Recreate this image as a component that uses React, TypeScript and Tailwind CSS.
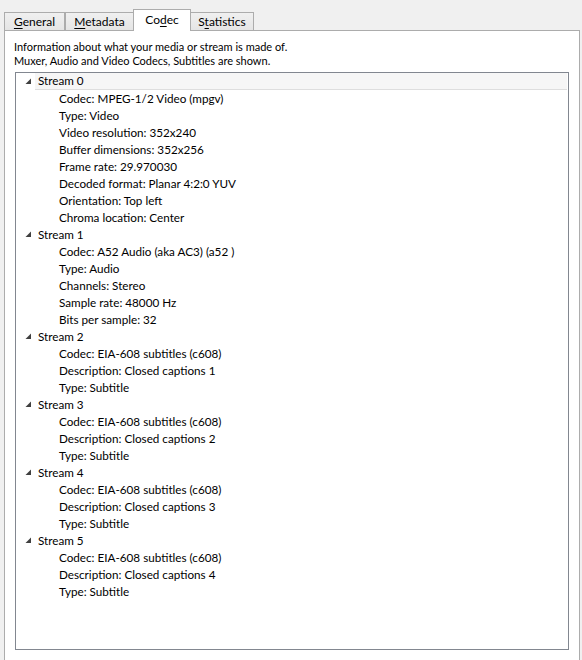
import React from "react";

interface Stream {
  name: string;
  props: string[];
}

const streams: Stream[] = [
  {
    name: "Stream 0",
    props: [
      "Codec: MPEG-1/2 Video (mpgv)",
      "Type: Video",
      "Video resolution: 352x240",
      "Buffer dimensions: 352x256",
      "Frame rate: 29.970030",
      "Decoded format: Planar 4:2:0 YUV",
      "Orientation: Top left",
      "Chroma location: Center",
    ],
  },
  {
    name: "Stream 1",
    props: [
      "Codec: A52 Audio (aka AC3) (a52 )",
      "Type: Audio",
      "Channels: Stereo",
      "Sample rate: 48000 Hz",
      "Bits per sample: 32",
    ],
  },
  {
    name: "Stream 2",
    props: ["Codec: EIA-608 subtitles (c608)", "Description: Closed captions 1", "Type: Subtitle"],
  },
  {
    name: "Stream 3",
    props: ["Codec: EIA-608 subtitles (c608)", "Description: Closed captions 2", "Type: Subtitle"],
  },
  {
    name: "Stream 4",
    props: ["Codec: EIA-608 subtitles (c608)", "Description: Closed captions 3", "Type: Subtitle"],
  },
  {
    name: "Stream 5",
    props: ["Codec: EIA-608 subtitles (c608)", "Description: Closed captions 4", "Type: Subtitle"],
  },
];

const Tab: React.FC<{ before: string; key_: string; after: string; selected?: boolean; width: string }> = ({
  before,
  key_,
  after,
  selected,
  width,
}) => (
  <div
    className={
      selected
        ? `relative z-10 -mb-px -ml-px -mr-px h-[22px] ${width} border border-b-0 border-[#acacac] bg-white flex items-center justify-center pb-[2px]`
        : `h-[18px] ${width} border border-b-0 border-[#acacac] bg-gradient-to-b from-[#f0f0f0] to-[#e5e5e5] flex items-center justify-center`
    }
  >
    <span>
      {before}
      <span className="underline underline-offset-2">{key_}</span>
      {after}
    </span>
  </div>
);

const Triangle = () => (
  <svg width="7" height="7" viewBox="0 0 7 7" className="block">
    <path d="M6 0.5 L6 6 L0.5 6 Z" fill="#404040" />
  </svg>
);

export default function App() {
  return (
    <div className="w-[582px] h-[660px] bg-[#f0f0f0] overflow-hidden font-['Lato',sans-serif] text-[11.7px] leading-[17px] text-black">
      <div className="flex items-end h-[30px] pl-[4px] text-[12px]">
        <Tab before="" key_="G" after="eneral" width="w-[61px]" />
        <Tab before="" key_="M" after="etadata" width="w-[69px]" />
        <Tab before="Co" key_="d" after="ec" selected width="w-[58px]" />
        <Tab before="S" key_="t" after="atistics" width="w-[64px]" />
      </div>
      <div className="ml-[4px] w-[576px] h-[640px] border border-[#acacac] bg-white pl-[9px] pt-[9px]">
        <div className="leading-[14px] text-[11px]">
          <p>Information about what your media or stream is made of.</p>
          <p>Muxer, Audio and Video Codecs, Subtitles are shown.</p>
        </div>
        <div className="mt-[4px] ml-px w-[554px] h-[578px] border border-[#828790] bg-white">
          {streams.map((s, i) => (
            <div key={s.name}>
              <div className="flex h-[17px] items-center">
                <div className="w-[19px] flex justify-end pr-[3px]">
                  <Triangle />
                </div>
                <div
                  className={
                    i === 0
                      ? "flex-1 h-[17px] pl-[3px] pb-px bg-[#f6f6f6] border-b border-[#dedede] mr-px flex items-center"
                      : "flex-1 h-[17px] pl-[3px] pb-px flex items-center"
                  }
                >
                  {s.name}
                </div>
              </div>
              {s.props.map((p) => (
                <div key={p} className="h-[17px] pl-[43px] pb-px flex items-center">
                  {p}
                </div>
              ))}
            </div>
          ))}
        </div>
      </div>
    </div>
  );
}
